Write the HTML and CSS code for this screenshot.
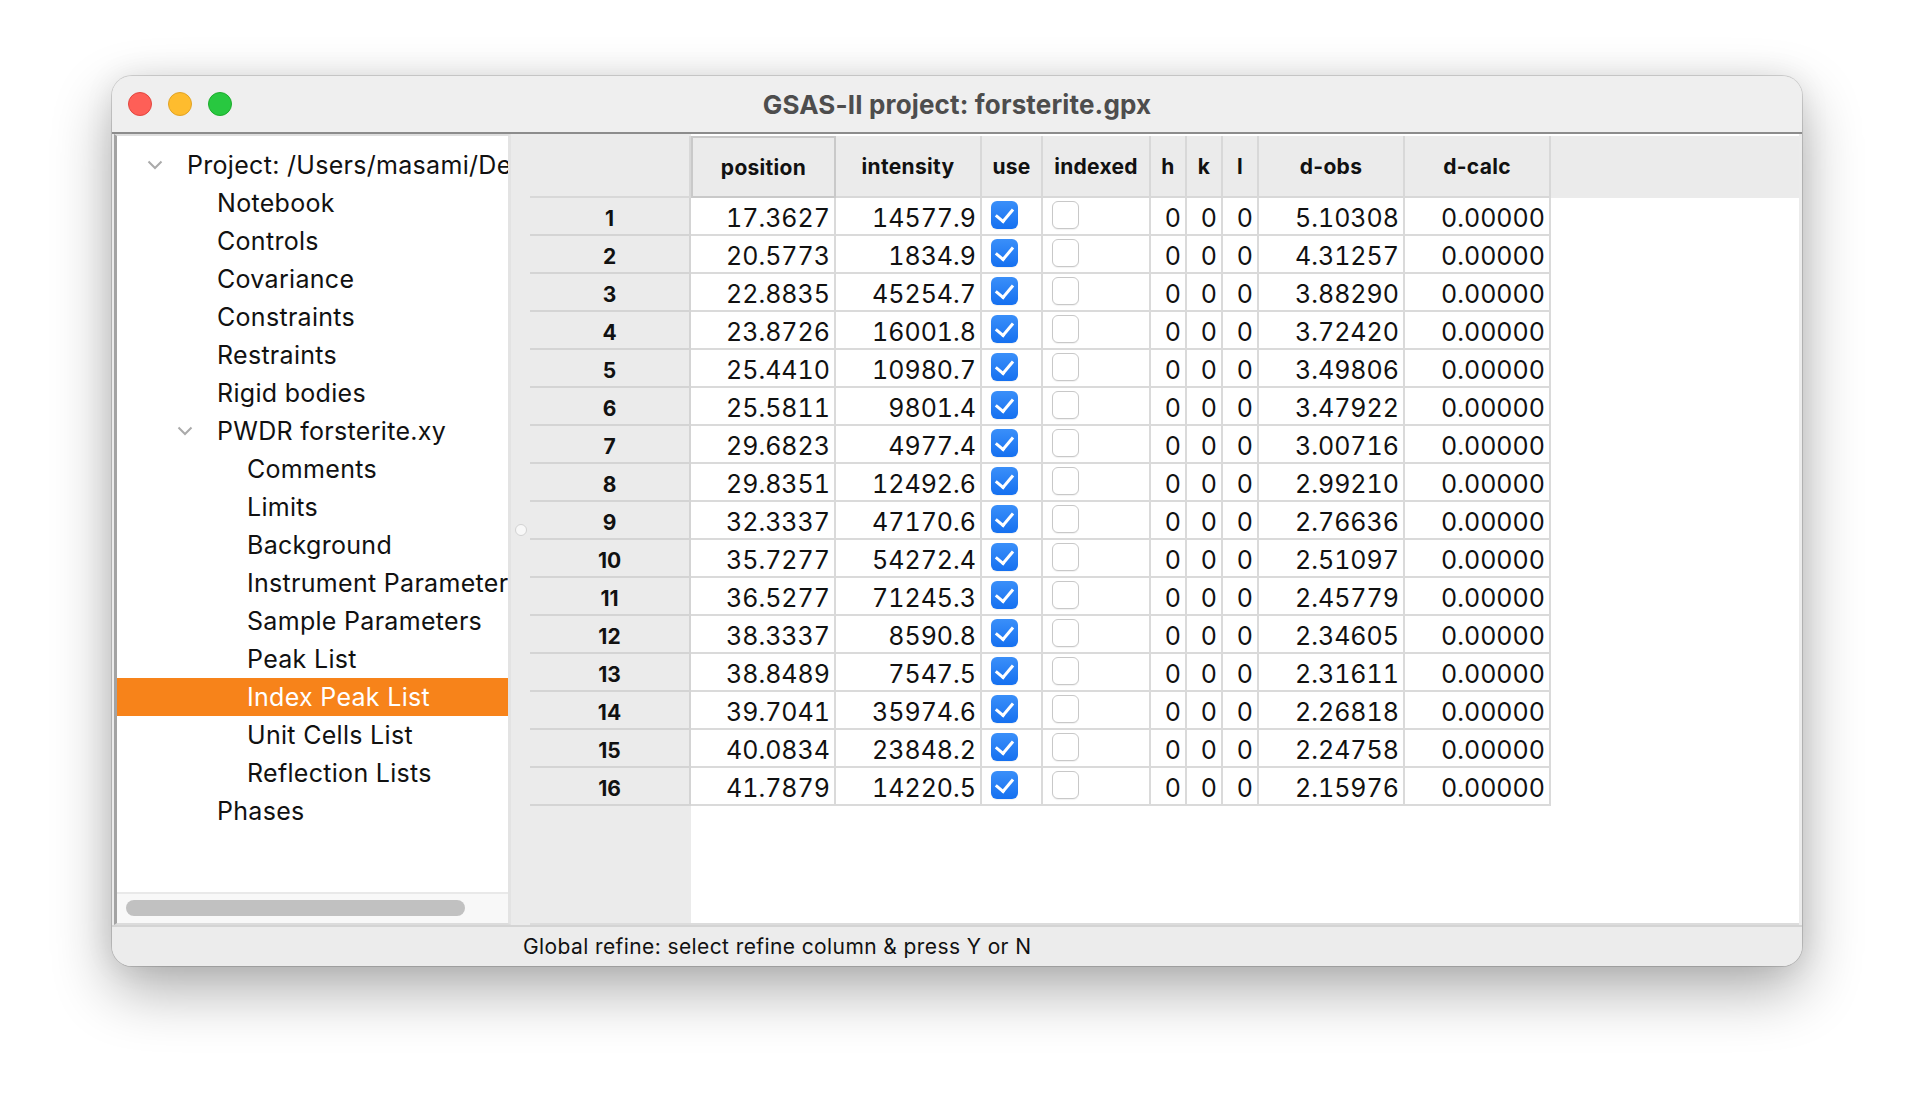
FILE: index.html
```html
<!DOCTYPE html>
<html lang="en">
<head>
    <meta charset="UTF-8">
    <title>GSAS-II project: forsterite.gpx</title>
    <link rel="stylesheet" href="styles.css">
</head>
<body>
<div class="desk">
    <div class="window">
        <!-- Title bar -->
        <div class="titlebar">
            <div class="lights">
                <span class="light red"></span>
                <span class="light yellow"></span>
                <span class="light green"></span>
            </div>
            <div class="title">GSAS-II project: forsterite.gpx</div>
            <div></div>
        </div>

        <div class="main">
            <!-- Data tree -->
            <div class="tree-pane">
                <div class="tree">
                    <div class="tree-row lvl0"><span class="chev"><svg width="16" height="10" viewBox="0 0 16 10"><path d="M1.5 1.5 L8 8 L14.5 1.5" fill="none" stroke="#aaa" stroke-width="2"/></svg></span><span class="label">Project: /Users/masami/Desktop</span></div>
                    <div class="tree-row lvl1">Notebook</div>
                    <div class="tree-row lvl1">Controls</div>
                    <div class="tree-row lvl1">Covariance</div>
                    <div class="tree-row lvl1">Constraints</div>
                    <div class="tree-row lvl1">Restraints</div>
                    <div class="tree-row lvl1">Rigid bodies</div>
                    <div class="tree-row lvl1"><span class="chev"><svg width="16" height="10" viewBox="0 0 16 10"><path d="M1.5 1.5 L8 8 L14.5 1.5" fill="none" stroke="#aaa" stroke-width="2"/></svg></span>PWDR forsterite.xy</div>
                    <div class="tree-row lvl2">Comments</div>
                    <div class="tree-row lvl2">Limits</div>
                    <div class="tree-row lvl2">Background</div>
                    <div class="tree-row lvl2">Instrument Parameters</div>
                    <div class="tree-row lvl2">Sample Parameters</div>
                    <div class="tree-row lvl2">Peak List</div>
                    <div class="tree-row lvl2 sel">Index Peak List</div>
                    <div class="tree-row lvl2">Unit Cells List</div>
                    <div class="tree-row lvl2">Reflection Lists</div>
                    <div class="tree-row lvl1">Phases</div>
                </div>
                <div class="hscroll"><div class="thumb"></div></div>
            </div>

            <div class="splitter"><span class="grip"></span></div>

            <!-- Peak grid -->
            <div class="grid-pane">
                <div class="grid">
                    <div class="hd corner"></div>
                    <div class="hd pos">position</div>
                    <div class="hd">intensity</div>
                    <div class="hd">use</div>
                    <div class="hd">indexed</div>
                    <div class="hd">h</div>
                    <div class="hd">k</div>
                    <div class="hd">l</div>
                    <div class="hd">d-obs</div>
                    <div class="hd">d-calc</div>
                    <div class="hd filler"></div>

                    <div class="rl">1</div><div class="c">17.3627</div><div class="c">14577.9</div><div class="c ck"><span class="box on"></span></div><div class="c ck"><span class="box"></span></div><div class="c">0</div><div class="c">0</div><div class="c">0</div><div class="c">5.10308</div><div class="c">0.00000</div><div class="fill"></div>
                    <div class="rl">2</div><div class="c">20.5773</div><div class="c">1834.9</div><div class="c ck"><span class="box on"></span></div><div class="c ck"><span class="box"></span></div><div class="c">0</div><div class="c">0</div><div class="c">0</div><div class="c">4.31257</div><div class="c">0.00000</div><div class="fill"></div>
                    <div class="rl">3</div><div class="c">22.8835</div><div class="c">45254.7</div><div class="c ck"><span class="box on"></span></div><div class="c ck"><span class="box"></span></div><div class="c">0</div><div class="c">0</div><div class="c">0</div><div class="c">3.88290</div><div class="c">0.00000</div><div class="fill"></div>
                    <div class="rl">4</div><div class="c">23.8726</div><div class="c">16001.8</div><div class="c ck"><span class="box on"></span></div><div class="c ck"><span class="box"></span></div><div class="c">0</div><div class="c">0</div><div class="c">0</div><div class="c">3.72420</div><div class="c">0.00000</div><div class="fill"></div>
                    <div class="rl">5</div><div class="c">25.4410</div><div class="c">10980.7</div><div class="c ck"><span class="box on"></span></div><div class="c ck"><span class="box"></span></div><div class="c">0</div><div class="c">0</div><div class="c">0</div><div class="c">3.49806</div><div class="c">0.00000</div><div class="fill"></div>
                    <div class="rl">6</div><div class="c">25.5811</div><div class="c">9801.4</div><div class="c ck"><span class="box on"></span></div><div class="c ck"><span class="box"></span></div><div class="c">0</div><div class="c">0</div><div class="c">0</div><div class="c">3.47922</div><div class="c">0.00000</div><div class="fill"></div>
                    <div class="rl">7</div><div class="c">29.6823</div><div class="c">4977.4</div><div class="c ck"><span class="box on"></span></div><div class="c ck"><span class="box"></span></div><div class="c">0</div><div class="c">0</div><div class="c">0</div><div class="c">3.00716</div><div class="c">0.00000</div><div class="fill"></div>
                    <div class="rl">8</div><div class="c">29.8351</div><div class="c">12492.6</div><div class="c ck"><span class="box on"></span></div><div class="c ck"><span class="box"></span></div><div class="c">0</div><div class="c">0</div><div class="c">0</div><div class="c">2.99210</div><div class="c">0.00000</div><div class="fill"></div>
                    <div class="rl">9</div><div class="c">32.3337</div><div class="c">47170.6</div><div class="c ck"><span class="box on"></span></div><div class="c ck"><span class="box"></span></div><div class="c">0</div><div class="c">0</div><div class="c">0</div><div class="c">2.76636</div><div class="c">0.00000</div><div class="fill"></div>
                    <div class="rl">10</div><div class="c">35.7277</div><div class="c">54272.4</div><div class="c ck"><span class="box on"></span></div><div class="c ck"><span class="box"></span></div><div class="c">0</div><div class="c">0</div><div class="c">0</div><div class="c">2.51097</div><div class="c">0.00000</div><div class="fill"></div>
                    <div class="rl">11</div><div class="c">36.5277</div><div class="c">71245.3</div><div class="c ck"><span class="box on"></span></div><div class="c ck"><span class="box"></span></div><div class="c">0</div><div class="c">0</div><div class="c">0</div><div class="c">2.45779</div><div class="c">0.00000</div><div class="fill"></div>
                    <div class="rl">12</div><div class="c">38.3337</div><div class="c">8590.8</div><div class="c ck"><span class="box on"></span></div><div class="c ck"><span class="box"></span></div><div class="c">0</div><div class="c">0</div><div class="c">0</div><div class="c">2.34605</div><div class="c">0.00000</div><div class="fill"></div>
                    <div class="rl">13</div><div class="c">38.8489</div><div class="c">7547.5</div><div class="c ck"><span class="box on"></span></div><div class="c ck"><span class="box"></span></div><div class="c">0</div><div class="c">0</div><div class="c">0</div><div class="c">2.31611</div><div class="c">0.00000</div><div class="fill"></div>
                    <div class="rl">14</div><div class="c">39.7041</div><div class="c">35974.6</div><div class="c ck"><span class="box on"></span></div><div class="c ck"><span class="box"></span></div><div class="c">0</div><div class="c">0</div><div class="c">0</div><div class="c">2.26818</div><div class="c">0.00000</div><div class="fill"></div>
                    <div class="rl">15</div><div class="c">40.0834</div><div class="c">23848.2</div><div class="c ck"><span class="box on"></span></div><div class="c ck"><span class="box"></span></div><div class="c">0</div><div class="c">0</div><div class="c">0</div><div class="c">2.24758</div><div class="c">0.00000</div><div class="fill"></div>
                    <div class="rl">16</div><div class="c">41.7879</div><div class="c">14220.5</div><div class="c ck"><span class="box on"></span></div><div class="c ck"><span class="box"></span></div><div class="c">0</div><div class="c">0</div><div class="c">0</div><div class="c">2.15976</div><div class="c">0.00000</div><div class="fill"></div>
                </div>
            </div>
        </div>

        <!-- Status bar -->
        <div class="statusbar">Global refine: select refine column &amp; press Y or N</div>
    </div>
</div>
</body>
</html>
```

FILE: styles.css
```css
body {
    margin: 0;
    background-color: #fff;
    font-family: Inter, "Liberation Sans", sans-serif;
    color: #111;
}

.desk {
    height: 1114px;
    padding: 76px 0 0 112px;
    box-sizing: border-box;
    overflow: hidden;
}

.window {
    width: 1690px;
    height: 890px;
    border-radius: 20px;
    background-color: #ececec;
    box-shadow: 0 0 0 1px rgba(0, 0, 0, 0.14), 0 24px 60px rgba(0, 0, 0, 0.32), 0 0 30px rgba(0, 0, 0, 0.08);
    overflow: hidden;
    display: flex;
    flex-direction: column;
}

/* title bar */
.titlebar {
    height: 56px;
    flex-shrink: 0;
    border-bottom: 2px solid #8c8c8c;
    background-color: #efefef;
    display: grid;
    grid-template-columns: 1fr auto 1fr;
    align-items: center;
}

.lights {
    display: flex;
    gap: 16px;
    padding-left: 16px;
}

.light {
    width: 24px;
    height: 24px;
    border-radius: 50%;
    box-sizing: border-box;
    border: 1px solid;
}

.red { background-color: #fe5f57; border-color: #e2463f; }
.yellow { background-color: #febc2e; border-color: #e1a325; }
.green { background-color: #28c840; border-color: #1dac2c; }

.title {
    font-size: 26px;
    font-weight: 700;
    letter-spacing: 0.15px;
    color: #4d4d4d;
}

.main {
    height: 791px;
    flex-shrink: 0;
    display: flex;
}

/* tree */
.tree-pane {
    width: 391px;
    margin-left: 2px;
    border-left: 3px solid #a3a3a3;
    border-right: 3px solid #e3e3e3;
    border-top: 2px solid #dedede;
    border-bottom: 2px solid #dcdcdc;
    background-color: #fff;
    display: flex;
    flex-direction: column;
    overflow: hidden;
}

.tree {
    flex: 1;
    padding-top: 10px;
    overflow: hidden;
}

.tree-row {
    height: 38px;
    display: flex;
    align-items: center;
    font-size: 25px;
    letter-spacing: 0.3px;
    white-space: nowrap;
    overflow: hidden;
}

.lvl0 { padding-left: 70px; }
.lvl1 { padding-left: 100px; }
.lvl2 { padding-left: 130px; }

.chev {
    flex-shrink: 0;
    width: 16px;
    margin-left: -40px;
    margin-right: 24px;
    display: flex;
}

.tree-row.sel {
    background-color: #f7831a;
    color: #fff;
}

.hscroll {
    flex-shrink: 0;
    height: 23px;
    border-top: 2px solid #e9e9e9;
    background-color: #f8f8f8;
    padding: 6px 0 0 9px;
}

.thumb {
    width: 339px;
    height: 16px;
    border-radius: 8px;
    background-color: #c1c1c1;
}

.splitter {
    width: 19px;
    background-color: #ebebeb;
    display: flex;
    align-items: center;
    justify-content: center;
}

.grip {
    width: 10px;
    height: 10px;
    border-radius: 50%;
    background-color: #f8f8f8;
    border: 1px solid #d2d2d2;
}

/* grid */
.grid-pane {
    flex: 1;
    margin-right: 3px;
    padding-top: 2px;
    border-bottom: 2px solid #dcdcdc;
    background: linear-gradient(to right, #ebebeb 161px, #fff 161px);
}

.grid {
    display: grid;
    grid-template-columns: 161px 145px 146px 61px 108px 36px 36px 36px 146px 146px 1fr;
    grid-template-rows: 62px;
    grid-auto-rows: 38px;
}

.grid > div {
    box-sizing: border-box;
}

.hd {
    background-color: #ebebeb;
    border-right: 2px solid #d8d8d8;
    border-bottom: 2px solid #d8d8d8;
    font-size: 21px;
    font-weight: 700;
    letter-spacing: 0.3px;
    display: flex;
    align-items: center;
    justify-content: center;
}

.hd.pos {
    border: 2px solid #c9c9c9;
}

.hd.filler {
    border: none;
}

.rl {
    background-color: #ebebeb;
    border-right: 2px solid #d4d4d4;
    border-bottom: 2px solid #d4d4d4;
    font-size: 21px;
    font-weight: 700;
    display: flex;
    align-items: center;
    justify-content: center;
    padding-top: 4px;
}

.c {
    background-color: #fff;
    border-right: 2px solid #dadada;
    border-bottom: 2px solid #dadada;
    font-size: 25px;
    font-feature-settings: "tnum";
    display: flex;
    align-items: center;
    justify-content: flex-end;
    padding: 4px 4px 0 0;
}

.c.ck {
    justify-content: flex-start;
    padding: 0 0 2px 9px;
}

.box {
    width: 27px;
    height: 28px;
    box-sizing: border-box;
    border-radius: 6px;
    border: 1.5px solid #c8c8c8;
    background-color: #fff;
    box-shadow: 0 1px 1px rgba(0, 0, 0, 0.06);
}

.box.on {
    border: none;
    background: linear-gradient(#3a8ff9, #1570f0);
    position: relative;
}

.box.on::after {
    content: "";
    position: absolute;
    left: 8px;
    top: 4px;
    width: 8px;
    height: 14px;
    border-right: 3.5px solid #fff;
    border-bottom: 3.5px solid #fff;
    transform: rotate(40deg);
}

/* status bar */
.statusbar {
    flex: 1;
    border-top: 2px solid #d4d4d4;
    background-color: #ececec;
    padding-left: 411px;
    font-size: 21px;
    letter-spacing: 0.4px;
    display: flex;
    align-items: center;
}
```
